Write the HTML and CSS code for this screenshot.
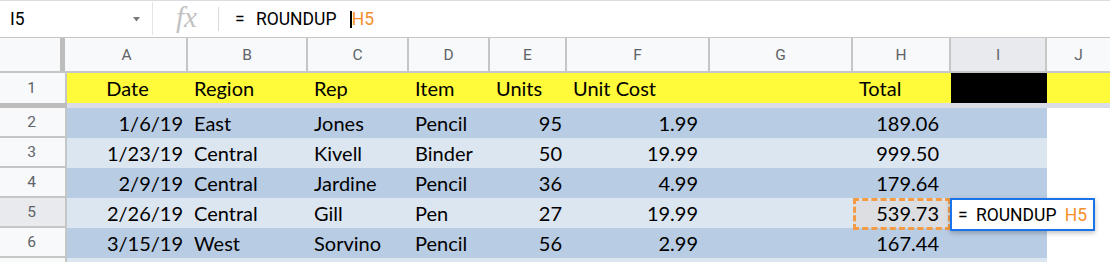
FILE: index.html
```html
<!DOCTYPE html>
<html>
<head>
<meta charset="utf-8">
<link rel="stylesheet" href="styles.css">
</head>
<body>
<div class="app">
  <div class="fbar">
    <div class="namebox">
      <span class="nb-text">I5</span>
      <svg class="nb-arrow" width="7" height="5" viewBox="0 0 7 5"><path d="M0 0 L7 0 L3.5 4.5 Z" fill="#7a7a7a"/></svg>
    </div>
    <div class="fx"><span>fx</span></div>
    <div class="fsep"></div>
    <div class="ftext">= ROUNDUP <span class="caret"></span><span class="ref">H5</span></div>
  </div>

  <div class="sheet">
    <div class="corner"></div>
    <div class="ch">A</div><div class="ch">B</div><div class="ch">C</div><div class="ch">D</div><div class="ch">E</div>
    <div class="ch">F</div><div class="ch">G</div><div class="ch">H</div><div class="ch sel">I</div><div class="ch last">J</div>

    <div class="rh r1">1</div>
    <div class="c y ctr">Date</div><div class="c y">Region</div><div class="c y">Rep</div><div class="c y">Item</div>
    <div class="c y">Units</div><div class="c y">Unit Cost</div><div class="c y"></div><div class="c y">Total</div>
    <div class="c blk"></div><div class="c y"></div>

    <div class="rh band-h"></div><div class="band"></div>

    <div class="rh">2</div>
    <div class="c d num">1/6/19</div><div class="c d">East</div><div class="c d">Jones</div><div class="c d">Pencil</div>
    <div class="c d num">95</div><div class="c d acc">1.99</div><div class="c d"></div><div class="c d acc">189.06</div>
    <div class="c d"></div><div class="c"></div>

    <div class="rh">3</div>
    <div class="c l num">1/23/19</div><div class="c l">Central</div><div class="c l">Kivell</div><div class="c l">Binder</div>
    <div class="c l num">50</div><div class="c l acc">19.99</div><div class="c l"></div><div class="c l acc">999.50</div>
    <div class="c l"></div><div class="c"></div>

    <div class="rh">4</div>
    <div class="c d num">2/9/19</div><div class="c d">Central</div><div class="c d">Jardine</div><div class="c d">Pencil</div>
    <div class="c d num">36</div><div class="c d acc">4.99</div><div class="c d"></div><div class="c d acc">179.64</div>
    <div class="c d"></div><div class="c"></div>

    <div class="rh sel">5</div>
    <div class="c l num">2/26/19</div><div class="c l">Central</div><div class="c l">Gill</div><div class="c l">Pen</div>
    <div class="c l num">27</div><div class="c l acc">19.99</div><div class="c l"></div><div class="c l acc copy">539.73</div>
    <div class="c l edit-cell"><div class="editor">= ROUNDUP <span class="ref">H5</span></div></div><div class="c"></div>

    <div class="rh">6</div>
    <div class="c d num">3/15/19</div><div class="c d">West</div><div class="c d">Sorvino</div><div class="c d">Pencil</div>
    <div class="c d num">56</div><div class="c d acc">2.99</div><div class="c d"></div><div class="c d acc">167.44</div>
    <div class="c d"></div><div class="c"></div>

    <div class="rh"></div>
    <div class="c l"></div><div class="c l"></div><div class="c l"></div><div class="c l"></div>
    <div class="c l"></div><div class="c l"></div><div class="c l"></div><div class="c l"></div>
    <div class="c l"></div><div class="c"></div>
  </div>
</div>
</body>
</html>
```

FILE: styles.css
```css
* { box-sizing: border-box; }
html, body { margin: 0; padding: 0; background: #fff; }
body { width: 1110px; height: 262px; overflow: hidden; }

.app { width: 1110px; }

/* formula bar */
.fbar {
  display: flex;
  height: 38px;
  border-top: 1px solid #dadce0;
  border-bottom: 1px solid #c4c7c5;
  font-family: Roboto, "Liberation Sans", sans-serif;
  font-size: 17.5px;
  color: #000;
}
.namebox {
  width: 153px;
  display: flex;
  align-items: center;
  padding-left: 10px;
  padding-right: 12px;
  border-right: 1px solid #e2e3e3;
  margin: 1px 0 2px;
}
.nb-text { flex: 1; }
.nb-arrow { margin-top: 1px; }
.fx {
  width: 65px;
  display: flex;
  align-items: center;
  justify-content: center;
  font-family: "Liberation Serif", "DejaVu Serif", serif;
  font-style: italic;
  font-size: 29px;
  color: #c2c2c2;
  padding-bottom: 4px;
  padding-left: 2px;
}
.fsep {
  width: 1px;
  background: #dadada;
  margin: 6px 0 6px;
}
.ftext {
  padding-left: 16px;
  display: flex;
  align-items: center;
  white-space: pre;
  word-spacing: 7px;
}
.caret {
  display: inline-block;
  width: 2px;
  height: 17px;
  background: #000;
  margin-left: 2px;
}
.ref { color: #f4902c; }

/* sheet grid */
.sheet {
  display: grid;
  grid-template-columns: 67px 121px 120px 101px 81px 77px 143px 143px 98px 96px 1fr;
  grid-template-rows: 35px 30px 5px repeat(6, 30px);
  font-family: Lato, "Open Sans", sans-serif;
  font-size: 20px;
  color: #000;
}
.corner {
  background: linear-gradient(to right, #f8f9fa 0 60px, #bdbdbd 60px 65px, #f8f9fa 65px 67px);
  border-bottom: 2px solid #c4c7c5;
}
.ch {
  background: #f8f9fa;
  border-right: 2px solid #c4c7c5;
  border-bottom: 2px solid #c4c7c5;
  display: flex;
  align-items: center;
  justify-content: center;
  font-family: Roboto, "Liberation Sans", sans-serif;
  font-size: 15.5px;
  color: #5f6368;
}
.ch.sel { background: #e8eaed; }
.ch.last { border-right: none; }

.rh {
  background: #f8f9fa;
  border-right: 2px solid #c4c7c5;
  border-bottom: 2px solid #c4c7c5;
  display: flex;
  align-items: center;
  justify-content: center;
  font-family: Roboto, "Liberation Sans", sans-serif;
  font-size: 15.5px;
  color: #5f6368;
  padding-right: 2px;
}
.rh.r1 { border-bottom: none; }
.rh.sel { background: #e8eaed; }
.rh.band-h { background: #bdbdbd; border: none; }
.band { grid-column: 2 / -1; background: #dadde6; }

.c {
  display: flex;
  align-items: center;
  padding: 0 6px;
  white-space: nowrap;
  overflow: visible;
}
.c.y { background: #fffa3a; }
.c.blk { background: #000; }
.c.d { background: #b8cce4; }
.c.l { background: #dce6f1; }
.c.ctr { justify-content: center; }
.c.num { justify-content: flex-end; padding-right: 5px; }
.c.acc { justify-content: flex-end; padding-right: 12px; }

.c.copy { position: relative; background: #dcdee2; }
.c.copy::after {
  content: "";
  position: absolute;
  left: 0; top: 0; right: 0; bottom: -2px;
  border: 3px dashed #f39c45;
  z-index: 2;
}

.edit-cell { position: relative; }
.editor {
  position: absolute;
  left: -1px;
  top: 0;
  width: 145px;
  height: 33px;
  background: #fff;
  border: 2px solid #1a73e8;
  box-shadow: 0 2px 5px rgba(0,0,0,0.25);
  z-index: 3;
  display: flex;
  align-items: center;
  padding-left: 6px;
  font-family: Roboto, "Liberation Sans", sans-serif;
  font-size: 17.5px;
  white-space: pre;
  word-spacing: 4px;
  color: #000;
}
```
